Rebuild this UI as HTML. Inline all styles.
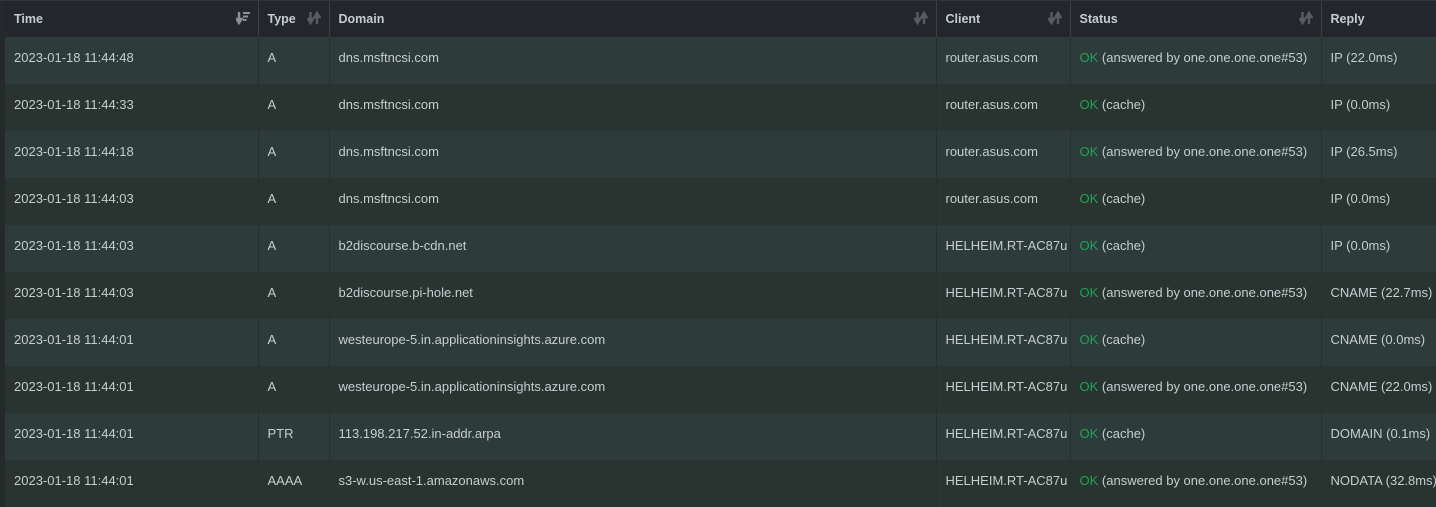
<!DOCTYPE html><html><head><style>
body{margin:0;background:#24292c;width:1436px;height:506px;overflow:hidden;font-family:"Liberation Sans",sans-serif;font-size:13px;color:#c5cdd0}
table{position:absolute;left:5px;top:0;border-collapse:collapse;table-layout:fixed;width:1440px}
th{background:#23272b;height:37px;text-align:left;font-weight:bold;padding:0 0 0 9px;border-right:1px solid #3a4044;position:relative;color:#c5cdd0;box-sizing:border-box;font-size:12.5px}
td{height:47px;padding:0 0 6px 9px;border-right:1px solid #27302e;white-space:nowrap;overflow:hidden;box-sizing:border-box}
tr:nth-child(odd) td{background:#2e3b3b}
tr:nth-child(even) td{background:#29332f}
.ok{color:#1fa35b}
.s{position:absolute;right:8px;top:11px}
.top{position:absolute;left:0;top:0;width:1436px;height:1px;background:#30363a}
</style></head><body>
<table>
<colgroup><col style="width:253px"><col style="width:71px"><col style="width:607px"><col style="width:134px"><col style="width:251px"><col style="width:124px"></colgroup>
<thead><tr>
<th>Time<svg class="s" width="14" height="14" viewBox="0 0 14 14"><path d="M3 1v9M0.5 8l2.5 4 2.5-4z" stroke="#8a9094" stroke-width="2.4" fill="#8a9094"/><path d="M7 2h7M7 5.5h5M7 9h3.5" stroke="#8a9094" stroke-width="2"/></svg></th>
<th>Type<svg class="s" width="14" height="14" viewBox="0 0 14 14"><g stroke="#565c60" fill="#565c60" stroke-width="2.4"><path d="M3.5 1v9M1 8l2.5 4 2.5-4z"/><path d="M10 13V4M7.5 6l2.5-4 2.5 4z"/></g></svg></th>
<th>Domain<svg class="s" width="14" height="14" viewBox="0 0 14 14"><g stroke="#565c60" fill="#565c60" stroke-width="2.4"><path d="M3.5 1v9M1 8l2.5 4 2.5-4z"/><path d="M10 13V4M7.5 6l2.5-4 2.5 4z"/></g></svg></th>
<th>Client<svg class="s" width="14" height="14" viewBox="0 0 14 14"><g stroke="#565c60" fill="#565c60" stroke-width="2.4"><path d="M3.5 1v9M1 8l2.5 4 2.5-4z"/><path d="M10 13V4M7.5 6l2.5-4 2.5 4z"/></g></svg></th>
<th>Status<svg class="s" width="14" height="14" viewBox="0 0 14 14"><g stroke="#565c60" fill="#565c60" stroke-width="2.4"><path d="M3.5 1v9M1 8l2.5 4 2.5-4z"/><path d="M10 13V4M7.5 6l2.5-4 2.5 4z"/></g></svg></th>
<th>Reply</th></tr></thead>
<tbody>
<tr><td>2023-01-18 11:44:48</td><td>A</td><td>dns.msftncsi.com</td><td>router.asus.com</td><td><span class="ok">OK</span> (answered by one.one.one.one#53)</td><td>IP (22.0ms)</td></tr>
<tr><td>2023-01-18 11:44:33</td><td>A</td><td>dns.msftncsi.com</td><td>router.asus.com</td><td><span class="ok">OK</span> (cache)</td><td>IP (0.0ms)</td></tr>
<tr><td>2023-01-18 11:44:18</td><td>A</td><td>dns.msftncsi.com</td><td>router.asus.com</td><td><span class="ok">OK</span> (answered by one.one.one.one#53)</td><td>IP (26.5ms)</td></tr>
<tr><td>2023-01-18 11:44:03</td><td>A</td><td>dns.msftncsi.com</td><td>router.asus.com</td><td><span class="ok">OK</span> (cache)</td><td>IP (0.0ms)</td></tr>
<tr><td>2023-01-18 11:44:03</td><td>A</td><td>b2discourse.b-cdn.net</td><td>HELHEIM.RT-AC87u</td><td><span class="ok">OK</span> (cache)</td><td>IP (0.0ms)</td></tr>
<tr><td>2023-01-18 11:44:03</td><td>A</td><td>b2discourse.pi-hole.net</td><td>HELHEIM.RT-AC87u</td><td><span class="ok">OK</span> (answered by one.one.one.one#53)</td><td>CNAME (22.7ms)</td></tr>
<tr><td>2023-01-18 11:44:01</td><td>A</td><td>westeurope-5.in.applicationinsights.azure.com</td><td>HELHEIM.RT-AC87u</td><td><span class="ok">OK</span> (cache)</td><td>CNAME (0.0ms)</td></tr>
<tr><td>2023-01-18 11:44:01</td><td>A</td><td>westeurope-5.in.applicationinsights.azure.com</td><td>HELHEIM.RT-AC87u</td><td><span class="ok">OK</span> (answered by one.one.one.one#53)</td><td>CNAME (22.0ms)</td></tr>
<tr><td>2023-01-18 11:44:01</td><td>PTR</td><td>113.198.217.52.in-addr.arpa</td><td>HELHEIM.RT-AC87u</td><td><span class="ok">OK</span> (cache)</td><td>DOMAIN (0.1ms)</td></tr>
<tr><td>2023-01-18 11:44:01</td><td>AAAA</td><td>s3-w.us-east-1.amazonaws.com</td><td>HELHEIM.RT-AC87u</td><td><span class="ok">OK</span> (answered by one.one.one.one#53)</td><td>NODATA (32.8ms)</td></tr>
</tbody></table>
<div class="top"></div>
</body></html>
